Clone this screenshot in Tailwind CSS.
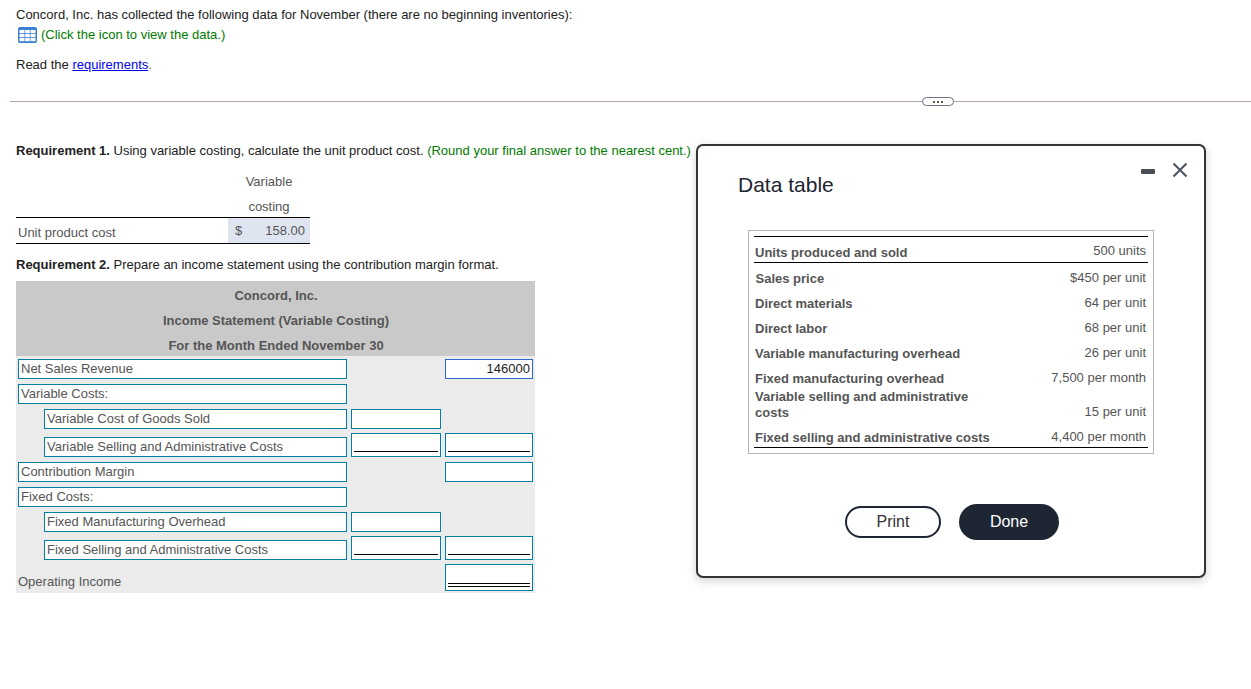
<!DOCTYPE html>
<html lang="en">
  <head>
    <meta charset="UTF-8" />
    <title>Variable costing</title>
    <script src="https://cdn.jsdelivr.net/npm/@tailwindcss/browser@4"></script>
  </head>
  <body class="bg-white font-['Liberation_Sans',Arial,sans-serif] text-[13px] text-[#222]">
    <div class="relative w-[1251px] h-[689px] overflow-hidden">
      <!-- Intro -->
      <div class="pl-4 pt-[7px]">
        <p class="h-[15px] leading-[15px]">Concord, Inc. has collected the following data for November (there are no beginning inventories):</p>
        <p class="mt-[5px] h-[15px] flex items-center text-[#007a00] ml-[2px] gap-[4px]">
          <svg width="19" height="16" viewBox="0 0 19 16">
            <rect width="19" height="16" rx="2" fill="#3b80d6" />
            <g fill="#fff">
              <rect x="1.5" y="3" width="5" height="3.2" /><rect x="7.25" y="3" width="4.5" height="3.2" /><rect x="12.5" y="3" width="5" height="3.2" />
              <rect x="1.5" y="7" width="5" height="3.2" /><rect x="7.25" y="7" width="4.5" height="3.2" /><rect x="12.5" y="7" width="5" height="3.2" />
              <rect x="1.5" y="11" width="5" height="3.2" /><rect x="7.25" y="11" width="4.5" height="3.2" /><rect x="12.5" y="11" width="5" height="3.2" />
            </g>
          </svg>
          <span>(Click the icon to view the data.)</span>
        </p>
        <p class="mt-[15px] h-[15px] leading-[15px]">Read the <a href="#" class="text-[#0000ee] underline">requirements</a><span class="text-[#555]">.</span></p>
      </div>

      <!-- Divider -->
      <div class="relative ml-[10px] mt-[29px] h-px bg-[#b5a3a8]">
        <div class="absolute left-[912px] top-[-4px] w-[32px] h-[9px] rounded-full border border-[#6b7280] bg-white flex items-center justify-center gap-[2px]">
          <span class="w-[2px] h-[2px] bg-[#555]"></span>
          <span class="w-[2px] h-[2px] bg-[#555]"></span>
          <span class="w-[2px] h-[2px] bg-[#555]"></span>
        </div>
      </div>

      <!-- Requirement 1 -->
      <div class="pl-4 pt-[41px]">
        <p class="h-[15px] leading-[15px] whitespace-nowrap"><b>Requirement 1.</b> Using variable costing, calculate the unit product cost. <span class="text-[#007a00]">(Round your final answer to the nearest cent.)</span></p>
        <div class="w-[294px] mt-[9px] text-[#555]">
          <div class="pl-[212px] w-[294px] pt-[2px] h-[50px]">
            <div class="w-[82px] text-center h-[25px] leading-[25px]">Variable</div>
            <div class="w-[82px] text-center h-[23px] leading-[25px]">costing</div>
          </div>
          <div class="flex h-[27px] border-y border-black">
            <div class="w-[212px] pl-[2px] leading-[29px]">Unit product cost</div>
            <div class="w-[82px] bg-[#dfe5f0] flex justify-between pl-[7px] pr-[5px] leading-[26px]"><span>$</span><span>158.00</span></div>
          </div>
        </div>
        <p class="mt-[13px] h-[15px] leading-[15px]"><b>Requirement 2.</b> Prepare an income statement using the contribution margin format.</p>
      </div>

      <!-- Income statement -->
      <div class="ml-4 mt-[9px] w-[519px] bg-[#ebebeb] text-[#555]">
        <div class="bg-[#c9c9c9] h-[75px] font-bold">
          <div class="w-[519px] text-center">
            <div class="w-[520px] h-[25px] leading-[30px] text-center">Concord, Inc.</div>
            <div class="w-[520px] h-[25px] leading-[30px] text-center">Income Statement (Variable Costing)</div>
            <div class="w-[520px] h-[25px] leading-[30px] text-center">For the Month Ended November 30</div>
          </div>
        </div>
        <div class="pt-[3px] pb-[2px] pl-[2px] flex flex-col">
          <div class="flex items-end h-[20px]">
            <div class="w-[329px] h-[20px] border border-[#007fa3] bg-white pl-[2px] leading-[18px]">Net Sales Revenue</div>
            <div class="ml-[98px] w-[88px] h-[20px] border border-[#3366cc] bg-white text-right pr-[2px] leading-[18px] text-[#222]">146000</div>
          </div>
          <div class="flex items-end h-[20px] mt-[5px]">
            <div class="w-[329px] h-[20px] border border-[#007fa3] bg-white pl-[2px] leading-[18px]">Variable Costs:</div>
          </div>
          <div class="flex items-end h-[20px] mt-[5px]">
            <div class="ml-[26px] w-[303px] h-[20px] border border-[#007fa3] bg-white pl-[2px] leading-[18px]">Variable Cost of Goods Sold</div>
            <div class="ml-[4px] w-[90px] h-[20px] border border-[#007fa3] bg-white"></div>
          </div>
          <div class="flex items-end h-[24px] mt-[4px]">
            <div class="ml-[26px] w-[303px] h-[20px] border border-[#007fa3] bg-white pl-[2px] leading-[18px]">Variable Selling and Administrative Costs</div>
            <div class="ml-[4px] w-[90px] h-[24px] border border-[#007fa3] bg-white px-[2px] pt-[17px]"><div class="h-px bg-black"></div></div>
            <div class="ml-[4px] w-[88px] h-[24px] border border-[#007fa3] bg-white px-[2px] pt-[17px]"><div class="h-px bg-black"></div></div>
          </div>
          <div class="flex items-end h-[20px] mt-[5px]">
            <div class="w-[329px] h-[20px] border border-[#007fa3] bg-white pl-[2px] leading-[18px]">Contribution Margin</div>
            <div class="ml-[98px] w-[88px] h-[20px] border border-[#007fa3] bg-white"></div>
          </div>
          <div class="flex items-end h-[20px] mt-[5px]">
            <div class="w-[329px] h-[20px] border border-[#007fa3] bg-white pl-[2px] leading-[18px]">Fixed Costs:</div>
          </div>
          <div class="flex items-end h-[20px] mt-[5px]">
            <div class="ml-[26px] w-[303px] h-[20px] border border-[#007fa3] bg-white pl-[2px] leading-[18px]">Fixed Manufacturing Overhead</div>
            <div class="ml-[4px] w-[90px] h-[20px] border border-[#007fa3] bg-white"></div>
          </div>
          <div class="flex items-end h-[24px] mt-[4px]">
            <div class="ml-[26px] w-[303px] h-[20px] border border-[#007fa3] bg-white pl-[2px] leading-[18px]">Fixed Selling and Administrative Costs</div>
            <div class="ml-[4px] w-[90px] h-[24px] border border-[#007fa3] bg-white px-[2px] pt-[17px]"><div class="h-px bg-black"></div></div>
            <div class="ml-[4px] w-[88px] h-[24px] border border-[#007fa3] bg-white px-[2px] pt-[17px]"><div class="h-px bg-black"></div></div>
          </div>
          <div class="flex items-start h-[27px] mt-[4px]">
            <div class="w-[427px] pt-[10px] leading-[15px]">Operating Income</div>
            <div class="w-[88px] h-[27px] border border-[#007fa3] bg-white px-[2px] pt-[18px]"><div class="h-[4px] border-y border-black"></div></div>
          </div>
        </div>
      </div>

      <!-- Data table window -->
      <div class="absolute left-[696px] top-[144px] w-[510px] h-[434px] border-2 border-[#333] rounded-[7px] bg-white shadow-[0_3px_10px_rgba(0,0,0,0.18)]">
        <h2 class="absolute left-[40px] top-[27px] text-[21px] leading-[24px] text-[#1c2530]">Data table</h2>
        <span class="absolute left-[443px] top-[23px] w-[14px] h-[5px] rounded-[1px] bg-[#4a4f55]"></span>
        <svg class="absolute left-[474px] top-[16px]" width="16" height="16" viewBox="0 0 16 16" fill="none" stroke="#4a5560" stroke-width="2"><path d="M1.5 1.5 14.5 14.5M14.5 1.5 1.5 14.5" /></svg>

        <div class="absolute left-[50px] top-[84px] w-[406px] h-[224px] border border-[#b5b5b5] p-[5px] text-[#555]">
          <div class="border-y border-black h-[27px] flex justify-between px-[1px] font-bold">
            <span class="leading-[31px]">Units produced and sold</span><span class="font-normal leading-[28px] pr-[1px]">500 units</span>
          </div>
          <div class="flex justify-between h-[25px] px-[1px] font-bold"><span class="leading-[31px] pl-[0.5px]">Sales price</span><span class="font-normal leading-[29px] pr-[1px]">$450 per unit</span></div>
          <div class="flex justify-between h-[25px] px-[1px] font-bold"><span class="leading-[31px]">Direct materials</span><span class="font-normal leading-[29px] pr-[1px]">64 per unit</span></div>
          <div class="flex justify-between h-[25px] px-[1px] font-bold"><span class="leading-[31px]">Direct labor</span><span class="font-normal leading-[29px] pr-[1px]">68 per unit</span></div>
          <div class="flex justify-between h-[25px] px-[1px] font-bold"><span class="leading-[31px]">Variable manufacturing overhead</span><span class="font-normal leading-[29px] pr-[1px]">26 per unit</span></div>
          <div class="flex justify-between h-[24px] px-[1px] font-bold"><span class="leading-[31px]">Fixed manufacturing overhead</span><span class="font-normal leading-[29px] pr-[1px]">7,500 per month</span></div>
          <div class="flex justify-between items-end h-[34px] px-[1px] font-bold"><span class="w-[230px] leading-[16px]">Variable selling and administrative costs</span><span class="font-normal leading-[16px] pr-[1px] pb-[1px]">15 per unit</span></div>
          <div class="flex justify-between h-[27px] border-b border-black px-[1px] font-bold"><span class="leading-[34px]">Fixed selling and administrative costs</span><span class="font-normal leading-[32px] pr-[1px]">4,400 per month</span></div>
        </div>

        <button class="absolute left-[147px] top-[360px] w-[96px] h-[32px] rounded-full border-2 border-[#1e2533] bg-white text-[16px] text-[#333]">Print</button>
        <button class="absolute left-[261px] top-[358px] w-[100px] h-[36px] rounded-full bg-[#1e2533] text-[16px] text-white">Done</button>
      </div>
    </div>
  </body>
</html>
